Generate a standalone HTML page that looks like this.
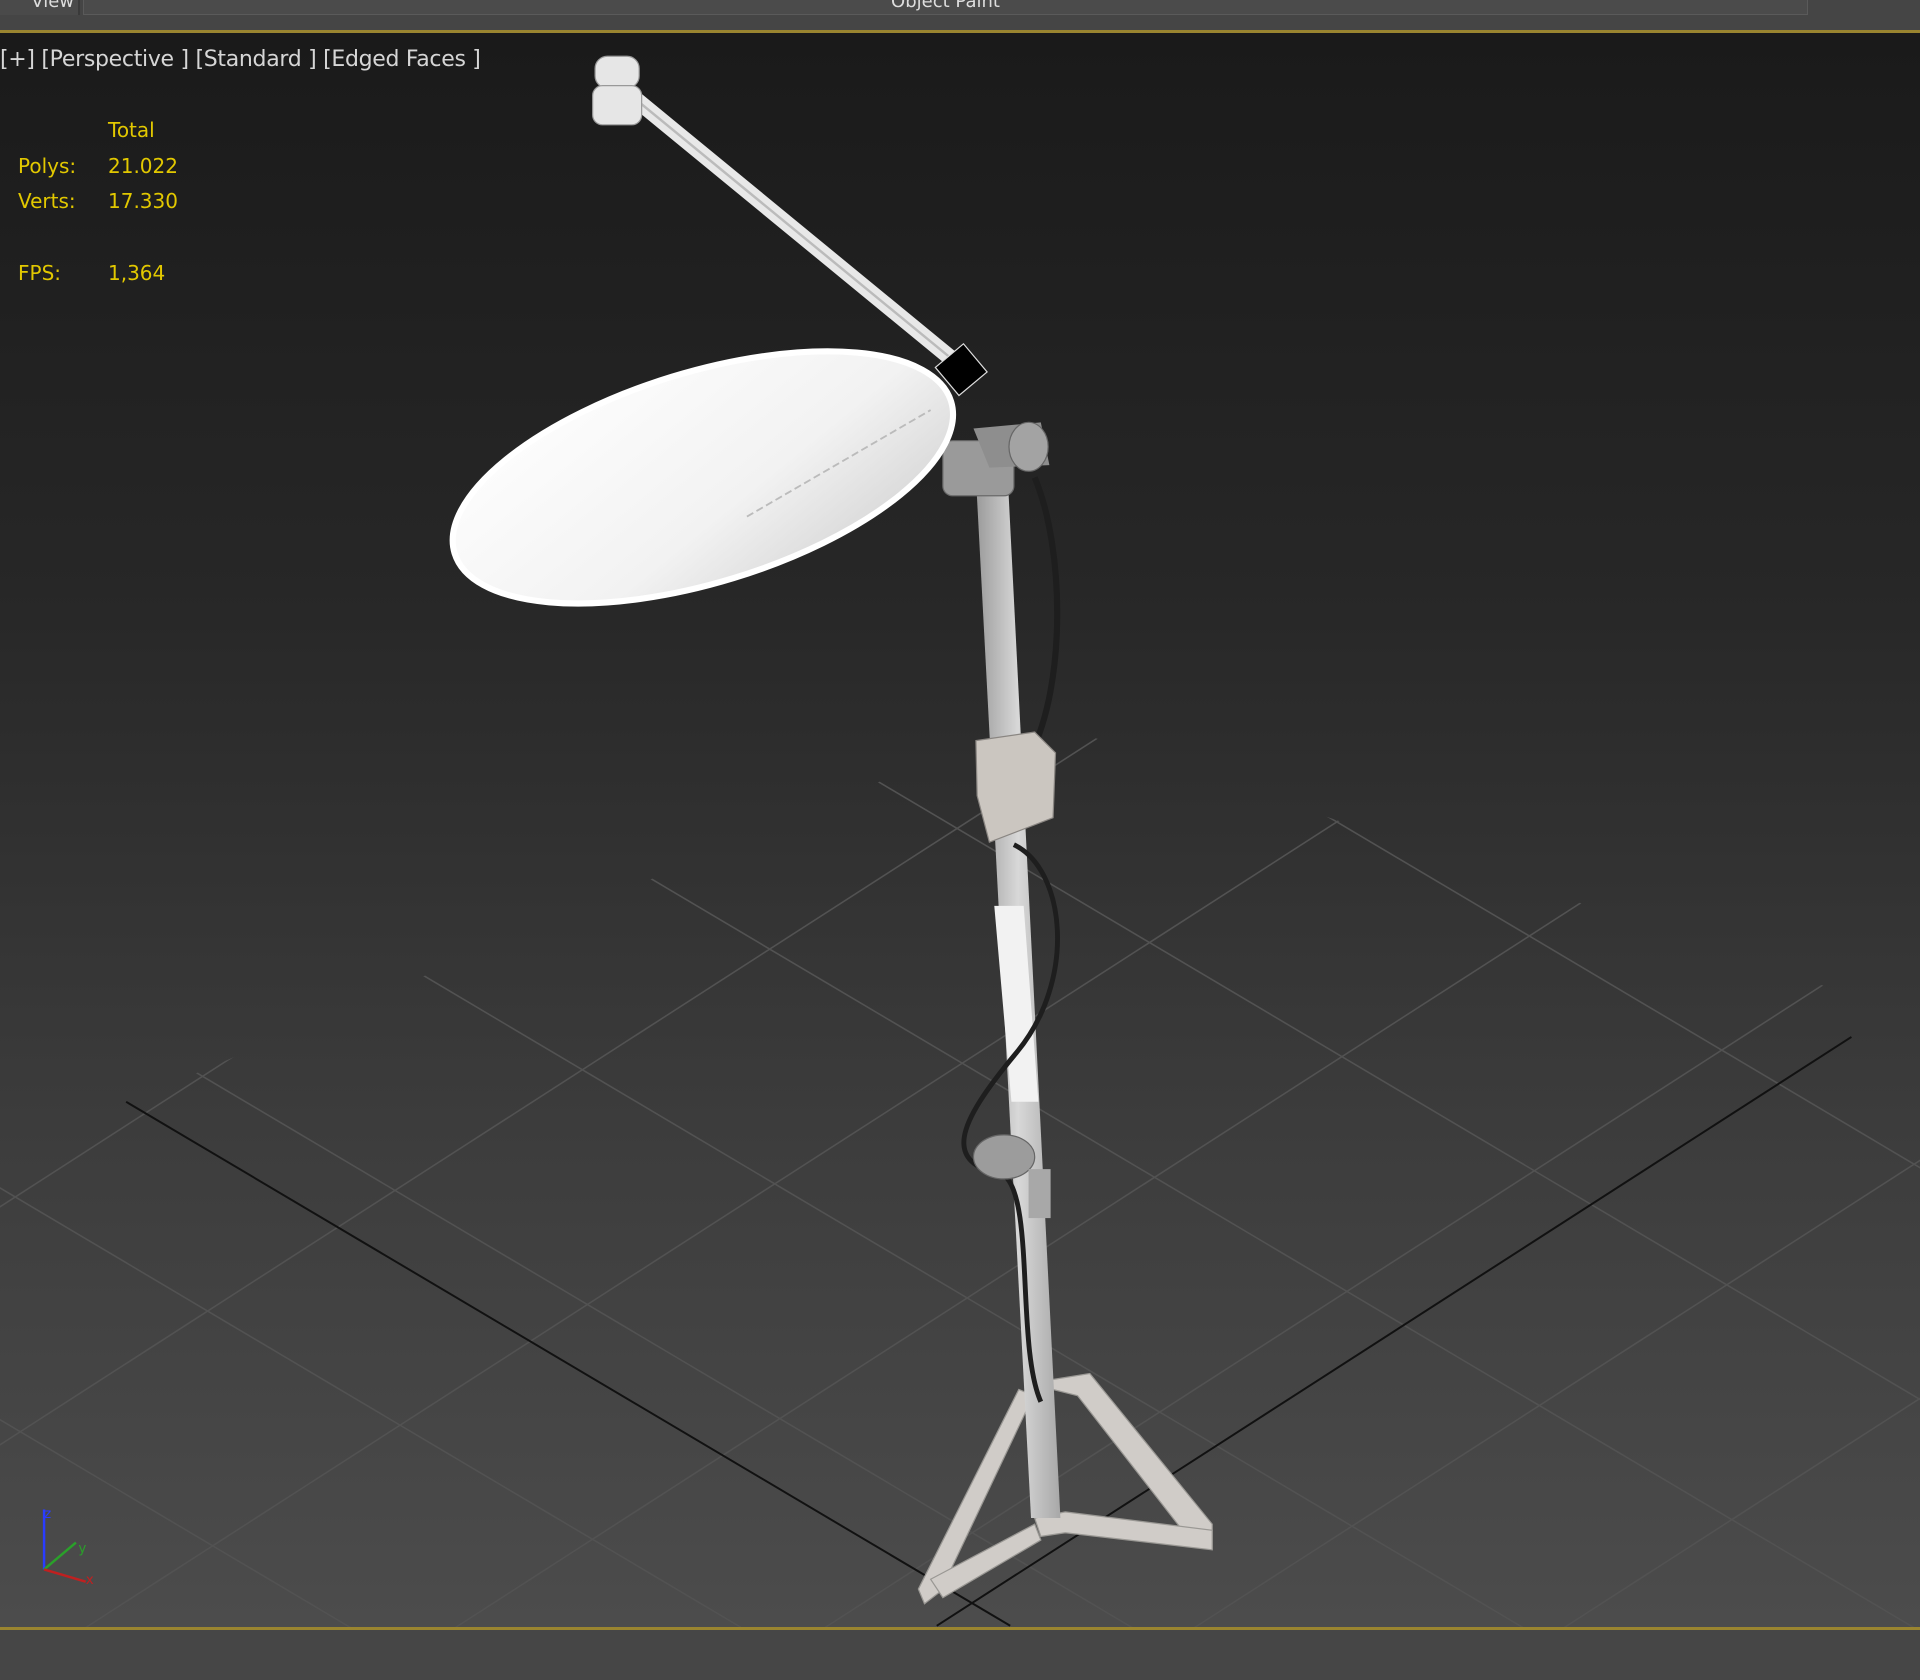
<!DOCTYPE html>
<html><head><meta charset="utf-8"><style>
html,body{margin:0;padding:0;width:1920px;height:1680px;overflow:hidden;background:#464646;font-family:"DejaVu Sans","Liberation Sans",sans-serif;}
#top{position:absolute;left:0;top:0;width:1920px;height:30px;background:#454545;}
#tab1{position:absolute;left:0;top:0;width:80px;height:15px;background:#4a4a4a;border-right:2px solid #3a3a3a;color:#ddd;font-size:18px;line-height:4px;text-align:right;padding-right:4px;box-sizing:border-box;overflow:hidden}
#tab2{position:absolute;left:83px;top:0;width:1723px;height:14px;background:#4b4b4b;border:1px solid #5a5a5a;border-top:none;color:#ddd;font-size:18px;line-height:4px;text-align:center;overflow:hidden}
#gold1{position:absolute;left:0;top:30px;width:1920px;height:3px;background:#9a8530;}
#gold2{position:absolute;left:0;top:1627px;width:1920px;height:3px;background:#9a8530;}
svg{position:absolute;left:0;top:33px;}
.lbl{position:absolute;left:0;top:47px;color:#d6d6d6;font-size:22px;white-space:pre;letter-spacing:-0.3px;line-height:26px}
.st{position:absolute;color:#e2c800;font-size:20px;line-height:24px}
</style></head><body>
<div id="top"><div id="tab1">View</div><div id="tab2">Object Paint</div></div>
<div id="gold1"></div>
<svg width="1920" height="1594" viewBox="0 27 1568 1302" preserveAspectRatio="none">
<defs>
<linearGradient id="bg" x1="0" y1="0" x2="0" y2="1"><stop offset="0" stop-color="#1a1a1a"/><stop offset="0.35" stop-color="#272727"/><stop offset="0.7" stop-color="#3d3d3d"/><stop offset="1" stop-color="#4c4c4c"/></linearGradient>
<linearGradient id="dish" x1="0" y1="0" x2="1" y2="1"><stop offset="0" stop-color="#ffffff"/><stop offset="0.6" stop-color="#f2f2f2"/><stop offset="1" stop-color="#cfcfcf"/></linearGradient>
<linearGradient id="pole" x1="0" y1="0" x2="1" y2="0"><stop offset="0" stop-color="#9a9a9a"/><stop offset="0.5" stop-color="#d8d8d8"/><stop offset="1" stop-color="#a8a8a8"/></linearGradient>
<clipPath id="gc"><polygon points="0,945 790,608 880,598 1568,832 1568,1330 0,1330"/></clipPath>
</defs>
<rect x="0" y="27" width="1568" height="1302" fill="url(#bg)"/>
<g clip-path="url(#gc)" stroke="#525252" stroke-width="1.3">
<line x1="-1200" y1="-120" x2="2000" y2="1778"/><line x1="-1100" y1="-250" x2="2100" y2="1648"/><line x1="-1000" y1="-380" x2="2200" y2="1518"/><line x1="-900" y1="-510" x2="2300" y2="1388"/><line x1="-800" y1="-640" x2="2400" y2="1258"/><line x1="-700" y1="-770" x2="2500" y2="1128"/><line x1="-600" y1="-900" x2="2600" y2="998"/><line x1="-500" y1="-1030" x2="2700" y2="868"/><line x1="-1300" y1="10" x2="1900" y2="1908"/><line x1="-1400" y1="140" x2="1800" y2="2038"/><line x1="-1500" y1="270" x2="1700" y2="2168"/><line x1="-1600" y1="400" x2="1600" y2="2298"/><line x1="-1700" y1="530" x2="1500" y2="2428"/><line x1="-1800" y1="660" x2="1400" y2="2558"/><line x1="-1900" y1="790" x2="1300" y2="2688"/>
<line x1="2600" y1="-300" x2="-600" y2="1761"/><line x1="2700" y1="-170" x2="-500" y2="1891"/><line x1="2800" y1="-40" x2="-400" y2="2021"/><line x1="2500" y1="-430" x2="-700" y2="1631"/><line x1="2400" y1="-560" x2="-800" y2="1501"/><line x1="2300" y1="-690" x2="-900" y2="1371"/><line x1="2200" y1="-820" x2="-1000" y2="1241"/><line x1="2100" y1="-950" x2="-1100" y2="1111"/><line x1="2000" y1="-1080" x2="-1200" y2="981"/><line x1="1900" y1="-1210" x2="-1300" y2="851"/><line x1="2900" y1="90" x2="-300" y2="2151"/><line x1="3000" y1="220" x2="-200" y2="2281"/>
</g>
<line x1="103" y1="900" x2="825" y2="1328" stroke="#111" stroke-width="1.6"/>
<line x1="1512" y1="847" x2="765" y2="1328" stroke="#111" stroke-width="1.6"/>
<g fill="#d0ccc8" stroke="#9a9894" stroke-width="1">
<polygon points="832,1135 844,1140 768,1300 755,1310 750,1298"/>
<polygon points="840,1130 890,1122 990,1245 990,1265 975,1262 880,1140"/>
<polygon points="845,1240 870,1235 990,1250 990,1266 870,1252 850,1255"/>
<polygon points="760,1290 845,1245 850,1258 770,1305"/>
</g>
<polygon points="797,390 823,390 866,1240 842,1240" fill="url(#pole)"/>
<polygon points="812,740 836,740 848,900 826,900" fill="#f2f2f2"/>
<path d="M845,390 C870,450 870,560 842,615" stroke="#1e1e1e" stroke-width="5" fill="none"/>
<path d="M828,690 C870,710 880,800 830,860 C780,920 770,950 820,960 C845,980 830,1100 850,1145" stroke="#1e1e1e" stroke-width="4" fill="none"/>
<polygon points="797,605 845,598 862,615 860,668 808,688 798,650" fill="#cbc6c0" stroke="#8a8682"/>
<ellipse cx="820" cy="945" rx="25" ry="18" fill="#9c9c9c" stroke="#666"/>
<rect x="840" y="955" width="18" height="40" fill="#a8a8a8"/>
<rect x="770" y="360" width="58" height="45" rx="8" fill="#9a9a9a" stroke="#6a6a6a"/>
<polygon points="795,350 850,345 857,380 808,382" fill="#8e8e8e"/>
<ellipse cx="840" cy="365" rx="16" ry="20" fill="#a3a3a3" stroke="#666"/>
<line x1="508" y1="72" x2="788" y2="302" stroke="#e8e8e8" stroke-width="13"/>
<line x1="508" y1="72" x2="788" y2="302" stroke="#bbb" stroke-width="2"/>
<rect x="770" y="287" width="30" height="30" fill="#000" stroke="#ddd" transform="rotate(-40 785 302)"/>
<g fill="#e6e6e6" stroke="#999"><rect x="486" y="46" width="36" height="26" rx="10"/><rect x="484" y="70" width="40" height="32" rx="8"/></g>
<ellipse cx="574" cy="390" rx="212" ry="86" transform="rotate(-17 574 390)" fill="url(#dish)" stroke="#fff" stroke-width="5"/>
<path d="M610,422 L760,335" stroke="#bbb" stroke-width="1.5" stroke-dasharray="6 3"/>
<line x1="36" y1="1282" x2="36" y2="1233" stroke="#2a3cff" stroke-width="2"/>
<line x1="36" y1="1282" x2="62" y2="1260" stroke="#2aa02a" stroke-width="2"/>
<line x1="36" y1="1282" x2="70" y2="1292" stroke="#c02020" stroke-width="2"/>
<text x="36" y="1240" fill="#2a3cff" font-size="11">z</text><text x="64" y="1268" fill="#2aa02a" font-size="11">y</text><text x="70" y="1294" fill="#c02020" font-size="11">x</text>
</svg>
<div class="lbl">[+] [Perspective ] [Standard ] [Edged Faces ]</div>
<div class="st" style="left:108px;top:118px">Total</div>
<div class="st" style="left:18px;top:154px">Polys:</div><div class="st" style="left:108px;top:154px">21.022</div>
<div class="st" style="left:18px;top:189px">Verts:</div><div class="st" style="left:108px;top:189px">17.330</div>
<div class="st" style="left:18px;top:261px">FPS:</div><div class="st" style="left:108px;top:261px">1,364</div>
<div id="gold2"></div>
</body></html>
